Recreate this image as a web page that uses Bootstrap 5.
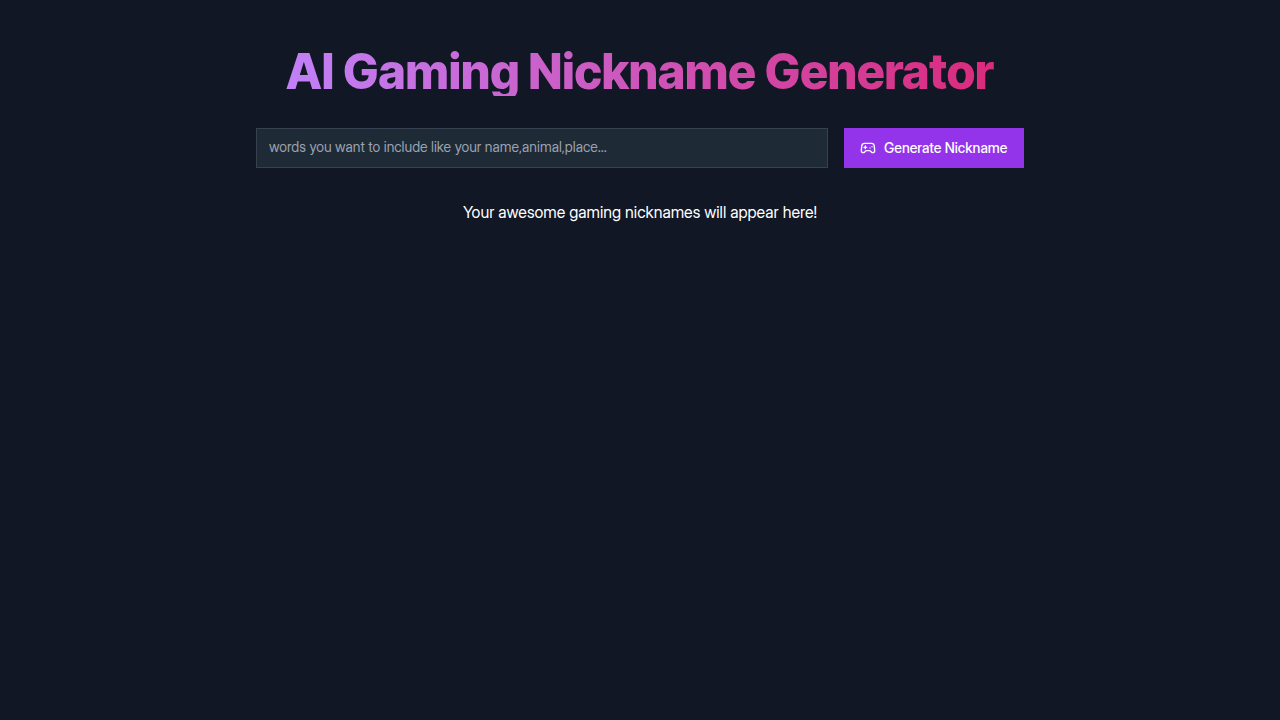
<!DOCTYPE html>
<html lang="en">
<head>
<meta charset="utf-8">
<meta name="viewport" content="width=device-width, initial-scale=1">
<title>AI Gaming Nickname Generator</title>
<link href="https://cdn.jsdelivr.net/npm/bootstrap@5.3.0/dist/css/bootstrap.min.css" rel="stylesheet">
<style>
  body { background: #111725; color: #fff; font-family: "Inter Display", Inter, "Liberation Sans", sans-serif; }
  .page-title {
    font-family: "Inter Tight", Inter, "Liberation Sans", sans-serif;
    font-size: 48px; line-height: 48px; font-weight: 800;
    color: transparent; background: linear-gradient(to right, #c084fc, #db2777);
    -webkit-background-clip: text; background-clip: text;
  }
  .generator { max-width: 768px; }
  .word-input, .word-input:focus {
    height: 40px; font-size: 14px; line-height: 20px; padding: 6px 12px 10px;
    color: #fff; background: #1f2a37; border-color: #374151;
  }
  .word-input::placeholder { color: #9ca3af; }
  .btn-generate {
    --bs-btn-color: #fff; --bs-btn-bg: #9333ea; --bs-btn-border-color: #9333ea;
    --bs-btn-hover-color: #fff; --bs-btn-hover-bg: #7e22ce; --bs-btn-hover-border-color: #7e22ce;
    --bs-btn-font-size: 14px; --bs-btn-line-height: 20px; --bs-btn-font-weight: 500;
    --bs-btn-padding-x: 15px; --bs-btn-padding-y: 8px;
    height: 40px; min-width: 180px;
  }
</style>
</head>
<body class="min-vh-100 px-3 py-5">
<main class="generator mx-auto">
  <h1 class="page-title text-center mb-0">AI Gaming Nickname Generator</h1>
  <form class="d-flex gap-3 mt-4 pt-2">
    <input type="text" class="form-control word-input rounded-0" aria-label="Words to include" placeholder="words you want to include like your name,animal,place...">
    <button type="button" class="btn btn-generate rounded-0 d-flex align-items-center gap-2 flex-shrink-0">
      <svg width="16" height="16" viewBox="0 0 24 24" fill="none" stroke="currentColor" stroke-width="2" stroke-linecap="round" stroke-linejoin="round" aria-hidden="true"><path d="M6 11h4M8 9v4M15 12h.01M18 10h.01"/><path d="M17.32 5H6.68a4 4 0 0 0-3.978 3.59c-.006.052-.01.101-.017.152C2.604 9.416 2 14.456 2 16a3 3 0 0 0 3 3c1 0 1.5-.5 2-1l1.414-1.414A2 2 0 0 1 9.828 16h4.344a2 2 0 0 1 1.414.586L17 18c.5.5 1 1 2 1a3 3 0 0 0 3-3c0-1.545-.604-6.584-.685-7.258-.007-.05-.011-.1-.017-.151A4 4 0 0 0 17.32 5z"/></svg>
      Generate Nickname
    </button>
  </form>
  <p class="text-center mt-4 pt-2 mb-0">Your awesome gaming nicknames will appear here!</p>
</main>
<script src="https://cdn.jsdelivr.net/npm/bootstrap@5.3.0/dist/js/bootstrap.bundle.min.js"></script>
</body>
</html>
